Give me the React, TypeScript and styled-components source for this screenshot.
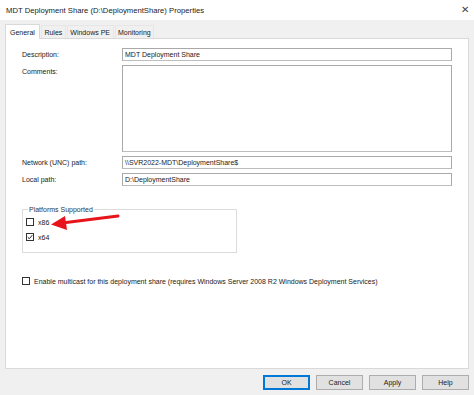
import styled, { createGlobalStyle } from 'styled-components'

const GlobalStyle = createGlobalStyle`
  html, body {
    margin: 0;
    padding: 0;
    background: #ffffff;
  }
`

const Window = styled.div`
  position: relative;
  width: 474px;
  height: 395px;
  display: flex;
  flex-direction: column;
  background: #f0f0f0;
  font-family: 'Liberation Sans', Arial, sans-serif;
  color: #1a1a1a;
  overflow: hidden;
`

const TitleBar = styled.div`
  height: 20px;
  flex: none;
  display: flex;
  align-items: center;
  justify-content: space-between;
  padding: 0 5px 0 6px;
  background: #ffffff;
`

const Title = styled.span`
  font-size: 7.7px;
  color: #222;
`

const Close = styled.span`
  font-size: 10px;
  color: #444;
  line-height: 1;
`

const Body = styled.div`
  flex: 1;
  display: flex;
  flex-direction: column;
  padding: 3px 5px 0 5px;
`

const TabStrip = styled.div`
  display: flex;
  align-items: flex-end;
  height: 15px;
  gap: 1px;
`

const Tab = styled.div<{ $active?: boolean }>`
  height: ${({ $active }) => ($active ? 15 : 13)}px;
  box-sizing: border-box;
  display: flex;
  align-items: center;
  padding: 0 ${({ $active }) => ($active ? 4 : 2.5)}px;
  font-size: 7px;
  background: ${({ $active }) => ($active ? '#ffffff' : '#f0f0f0')};
  border: 1px solid ${({ $active }) => ($active ? '#d9d9d9' : '#e6e6e6')};
  border-bottom: none;
  margin-bottom: ${({ $active }) => ($active ? -1 : 0)}px;
  position: relative;
  z-index: ${({ $active }) => ($active ? 1 : 0)};
`

const Panel = styled.div`
  height: 331px;
  box-sizing: border-box;
  display: flex;
  flex-direction: column;
  padding: 9px 16px 0 16px;
  background: #ffffff;
  border: 1px solid #d9d9d9;
`

const FieldRow = styled.div`
  display: grid;
  grid-template-columns: 100px 1fr;
  align-items: start;
  margin-bottom: 4px;
`

const Label = styled.span`
  font-size: 7px;
  line-height: 13px;
  color: #222;
`

const Input = styled.div<{ $tall?: boolean }>`
  height: ${({ $tall }) => ($tall ? 87 : 13)}px;
  box-sizing: border-box;
  border: 1px solid #a9a9a9;
  border-bottom-color: #bdbdbd;
  padding: 0 2px;
  font-size: 7px;
  line-height: 11px;
  color: #222;
  white-space: nowrap;
  overflow: hidden;
`

const GroupBox = styled.fieldset`
  margin: 16px 0 0 0;
  width: 215px;
  height: 47px;
  box-sizing: border-box;
  padding: 5px 3px 0 3px;
  border: 1px solid #dcdcdc;
  display: flex;
  flex-direction: column;
  gap: 7px;
`

const Legend = styled.legend`
  font-size: 7px;
  color: #333;
  padding: 0 1px;
  margin-left: 2px;
`

const CheckRow = styled.label<{ $top?: number }>`
  display: flex;
  align-items: center;
  gap: 4px;
  margin-top: ${({ $top }) => $top ?? 0}px;
  font-size: 7px;
  color: #222;
`

const Box = styled.span`
  width: 8px;
  height: 8px;
  flex: none;
  box-sizing: border-box;
  border: 1px solid #333;
  background: #fff;
  display: flex;
  align-items: center;
  justify-content: center;
`

const ButtonRow = styled.div`
  display: flex;
  justify-content: flex-end;
  gap: 6px;
  padding: 6px 0 0 0;
`

const Button = styled.button<{ $primary?: boolean }>`
  width: 47px;
  height: 15px;
  padding: 0;
  font-family: inherit;
  font-size: 7px;
  color: #222;
  background: #e1e1e1;
  border: 1px solid ${({ $primary }) => ($primary ? '#0078d7' : '#adadad')};
  box-shadow: ${({ $primary }) => ($primary ? 'inset 0 0 0 1px #0078d7' : 'none')};
`

const Arrow = styled.svg`
  position: absolute;
  left: 48px;
  top: 211px;
  pointer-events: none;
`

function Check({ checked }: { checked?: boolean }) {
  return (
    <Box>
      {checked && (
        <svg width="6" height="6" viewBox="0 0 6 6">
          <path d="M0.7 3.1 L2.3 4.7 L5.3 1.2" fill="none" stroke="#222" strokeWidth="1" />
        </svg>
      )}
    </Box>
  )
}

export default function App() {
  return (
    <>
      <GlobalStyle />
      <Window>
        <TitleBar>
          <Title>MDT Deployment Share (D:\DeploymentShare) Properties</Title>
          <Close>✕</Close>
        </TitleBar>
        <Body>
          <TabStrip>
            <Tab $active>General</Tab>
            <Tab>Rules</Tab>
            <Tab>Windows PE</Tab>
            <Tab>Monitoring</Tab>
          </TabStrip>
          <Panel>
            <FieldRow>
              <Label>Description:</Label>
              <Input>MDT Deployment Share</Input>
            </FieldRow>
            <FieldRow>
              <Label>Comments:</Label>
              <Input $tall />
            </FieldRow>
            <FieldRow>
              <Label>Network (UNC) path:</Label>
              <Input>\\SVR2022-MDT\DeploymentShare$</Input>
            </FieldRow>
            <FieldRow>
              <Label>Local path:</Label>
              <Input>D:\DeploymentShare</Input>
            </FieldRow>
            <GroupBox>
              <Legend>Platforms Supported</Legend>
              <CheckRow>
                <Check />
                x86
              </CheckRow>
              <CheckRow>
                <Check checked />
                x64
              </CheckRow>
            </GroupBox>
            <CheckRow $top={24}>
              <Check />
              Enable multicast for this deployment share (requires Windows Server 2008 R2 Windows Deployment Services)
            </CheckRow>
          </Panel>
          <ButtonRow>
            <Button $primary>OK</Button>
            <Button>Cancel</Button>
            <Button>Apply</Button>
            <Button>Help</Button>
          </ButtonRow>
        </Body>
        <Arrow width="72" height="22" viewBox="0 0 72 22">
          <line x1="70" y1="5" x2="14" y2="12" stroke="#e8141c" strokeWidth="3" strokeLinecap="round" />
          <polygon points="3,13.5 17,5 19,19" fill="#e8141c" />
        </Arrow>
      </Window>
    </>
  )
}
